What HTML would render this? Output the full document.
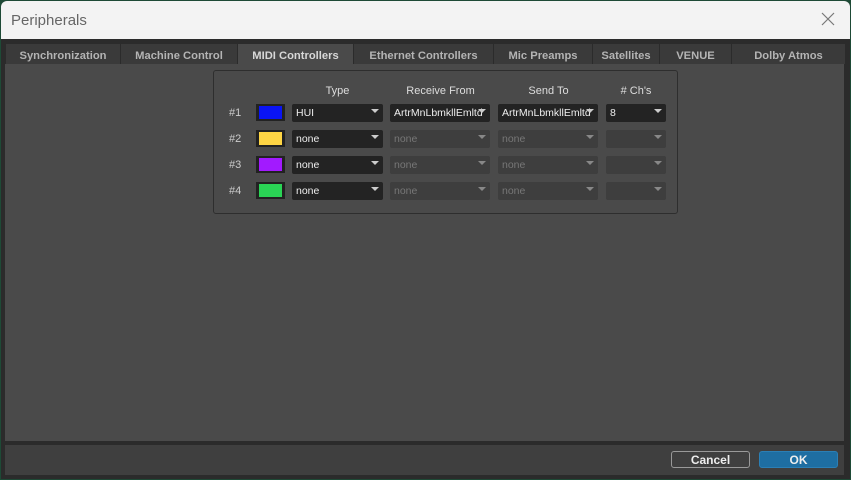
<!DOCTYPE html>
<html><head><style>
*{margin:0;padding:0;box-sizing:border-box}
body{width:851px;height:480px;background:#1e4a36;font-family:"Liberation Sans",Arial,sans-serif;position:relative;overflow:hidden}
.win{position:absolute;left:1px;top:1px;width:849px;height:478px;background:#2b2b2b;border-radius:6px 6px 0 0;overflow:hidden}
.title{position:absolute;left:0;top:0;width:849px;height:38px;background:#f3f3f3;font-size:15px;color:#666;padding:11px 0 0 10px}
.x{position:absolute;right:14px;top:10px;width:16px;height:16px}
.tab{position:absolute;top:44px;height:20px;background:#3a3a3a;color:#b4b4b4;font-weight:bold;font-size:11.2px;text-align:center;line-height:12px;padding-top:6px}
.tab.a{background:#4a4a4a;color:#d8d8d8}
.panel{position:absolute;left:5px;top:64px;width:839px;height:377px;background:#4a4a4a}
.grp{position:absolute;left:213px;top:70px;width:465px;height:144px;border:1px solid #2e2e2e;border-radius:3px}
.h{position:absolute;top:85px;font-size:11px;color:#ddd;text-align:center}
.n{position:absolute;left:229px;font-size:11px;color:#ccc}
.sw{position:absolute;left:256px;width:29px;height:17px;background:#222;padding:2px 3px}
.sw div{width:100%;height:100%}
.dd{position:absolute;height:18px;border-radius:2px;font-size:10.5px;padding:3px 0 0 4px;overflow:hidden;white-space:nowrap}
.dd:after{content:"";position:absolute;right:4px;top:5px;border-left:4px solid transparent;border-right:4px solid transparent;border-top:4px solid #ccc}
.on{background:#232323;color:#eee}
.off{background:#3e3e3e;color:#777}
.off:after{border-top-color:#888}
.bot{position:absolute;left:5px;top:445px;width:839px;height:30px;background:#3f3f3f}
.btn{position:absolute;top:451px;height:17px;border-radius:3px;font-size:12px;font-weight:bold;color:#eee;text-align:center;line-height:16px}
</style></head><body>
<div class="win">
<div class="title">Peripherals
<svg class="x" viewBox="0 0 16 16"><path d="M2 2L14 14M14 2L2 14" stroke="#777" stroke-width="1.2"/></svg></div>
</div>
<div class="tab" style="left:6px;width:114px">Synchronization</div>
<div class="tab" style="left:121px;width:116px">Machine Control</div>
<div class="tab a" style="left:238px;width:115px">MIDI Controllers</div>
<div class="tab" style="left:354px;width:139px">Ethernet Controllers</div>
<div class="tab" style="left:494px;width:98px">Mic Preamps</div>
<div class="tab" style="left:593px;width:66px">Satellites</div>
<div class="tab" style="left:660px;width:71px">VENUE</div>
<div class="tab" style="left:732px;width:113px">Dolby Atmos</div>
<div class="panel"></div>
<div class="grp"></div>
<div class="h" style="left:292px;width:91px">Type</div>
<div class="h" style="left:390px;width:101px">Receive From</div>
<div class="h" style="left:498px;width:101px">Send To</div>
<div class="h" style="left:606px;width:60px"># Ch's</div>

<div class="n" style="top:107px">#1</div>
<div class="sw" style="top:104px"><div style="background:#0a14f5"></div></div>
<div class="dd on" style="left:292px;top:104px;width:91px">HUI</div>
<div class="dd on" style="left:390px;top:104px;width:100px">ArtrMnLbmkllEmltd</div>
<div class="dd on" style="left:498px;top:104px;width:100px">ArtrMnLbmkllEmltd</div>
<div class="dd on" style="left:606px;top:104px;width:60px">8</div>

<div class="n" style="top:133px">#2</div>
<div class="sw" style="top:130px"><div style="background:#fed544"></div></div>
<div class="dd on" style="left:292px;top:130px;width:91px">none</div>
<div class="dd off" style="left:390px;top:130px;width:100px">none</div>
<div class="dd off" style="left:498px;top:130px;width:100px">none</div>
<div class="dd off" style="left:606px;top:130px;width:60px"></div>

<div class="n" style="top:159px">#3</div>
<div class="sw" style="top:156px"><div style="background:#a21aff"></div></div>
<div class="dd on" style="left:292px;top:156px;width:91px">none</div>
<div class="dd off" style="left:390px;top:156px;width:100px">none</div>
<div class="dd off" style="left:498px;top:156px;width:100px">none</div>
<div class="dd off" style="left:606px;top:156px;width:60px"></div>

<div class="n" style="top:185px">#4</div>
<div class="sw" style="top:182px"><div style="background:#2ad455"></div></div>
<div class="dd on" style="left:292px;top:182px;width:91px">none</div>
<div class="dd off" style="left:390px;top:182px;width:100px">none</div>
<div class="dd off" style="left:498px;top:182px;width:100px">none</div>
<div class="dd off" style="left:606px;top:182px;width:60px"></div>

<div class="bot"></div>
<div class="btn" style="left:671px;width:79px;border:1px solid #999;background:#3f3f3f">Cancel</div>
<div class="btn" style="left:759px;width:79px;background:#1e6ea2;border:1px solid #2b7fb5">OK</div>
</body></html>
